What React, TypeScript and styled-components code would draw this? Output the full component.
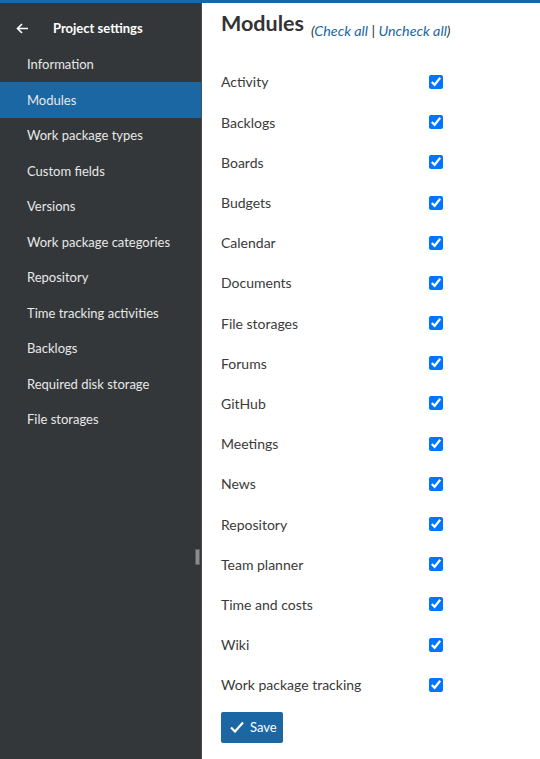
import React, { useState } from "react";
import styled, { createGlobalStyle } from "styled-components";

const GlobalStyle = createGlobalStyle`
	html, body {
		margin: 0;
		padding: 0;
		background: #fff;
		font-family: Lato, "Noto Sans", sans-serif;
	}
`;

const Page = styled.div`
	width: 540px;
	height: 759px;
	display: flex;
	flex-direction: column;
	overflow: hidden;
`;

const TopBar = styled.div`
	height: 3px;
	background: #1a67a3;
	flex-shrink: 0;
`;

const Body = styled.div`
	flex: 1;
	display: flex;
	min-height: 0;
`;

const Sidebar = styled.nav`
	position: relative;
	width: 202px;
	flex-shrink: 0;
	background: #333739;
	border-right: 1px solid #4a4e51;
	box-sizing: border-box;
	display: flex;
	flex-direction: column;
`;

const SideHeader = styled.div`
	display: flex;
	align-items: center;
	height: 20px;
	padding: 15px 0 8.5px 16px;
	color: #fff;
	font-size: 13px;
	font-weight: 700;
`;

const BackIcon = styled.svg`
	width: 13px;
	height: 13px;
	margin-right: 24px;
`;

const NavItem = styled.div<{ $active?: boolean }>`
	height: 35.5px;
	display: flex;
	align-items: center;
	padding-left: 27px;
	font-size: 13px;
	color: #e8e8e8;
	background: ${(p) => (p.$active ? "#1a67a3" : "transparent")};
`;

const ResizeHandle = styled.div`
	position: absolute;
	right: 1px;
	top: 546px;
	width: 3px;
	height: 14px;
	background: #8a8d90;
	border: 1px solid #5c6063;
`;

const Main = styled.main`
	flex: 1;
	padding: 7px 0 0 19px;
	color: #333;
`;

const TitleRow = styled.div`
	display: flex;
	align-items: flex-start;
	gap: 7px;
	height: 33px;
`;

const Title = styled.h2`
	margin: 0;
	font-size: 21.5px;
	line-height: 26px;
	font-weight: 700;
	color: #333;
`;

const Links = styled.span`
	margin-top: 12px;
	font-size: 14.3px;
	line-height: 18px;
	font-style: italic;
	color: #333;
`;

const Link = styled.a`
	color: #1a67a3;
	text-decoration: none;
	cursor: pointer;
`;

const List = styled.div`
	margin-top: 18.9px;
	display: flex;
	flex-direction: column;
`;

const Row = styled.label`
	height: 40.2px;
	display: flex;
	align-items: center;
	font-size: 14px;
	color: #3a3a3a;
`;

const RowLabel = styled.span`
	width: 208px;
`;

const Check = styled.input`
	width: 14px;
	height: 14px;
	margin: 0;
	accent-color: #0075ff;
`;

const SaveButton = styled.button`
	margin-top: 7px;
	width: 62px;
	height: 31px;
	display: flex;
	align-items: center;
	gap: 6px;
	padding: 0 0 0 9px;
	background: #1a67a3;
	border: 0;
	border-radius: 2px;
	color: #fff;
	font-family: Lato, "Noto Sans", sans-serif;
	font-size: 13px;
`;

const navItems = [
	"Information",
	"Modules",
	"Work package types",
	"Custom fields",
	"Versions",
	"Work package categories",
	"Repository",
	"Time tracking activities",
	"Backlogs",
	"Required disk storage",
	"File storages",
];

const modules = [
	"Activity",
	"Backlogs",
	"Boards",
	"Budgets",
	"Calendar",
	"Documents",
	"File storages",
	"Forums",
	"GitHub",
	"Meetings",
	"News",
	"Repository",
	"Team planner",
	"Time and costs",
	"Wiki",
	"Work package tracking",
];

const App = () => {
	const [checked, setChecked] = useState<boolean[]>(modules.map(() => true));

	const setAll = (v: boolean) => setChecked(modules.map(() => v));

	return (
		<Page>
			<GlobalStyle />
			<TopBar />
			<Body>
				<Sidebar>
					<SideHeader>
						<BackIcon viewBox="0 0 13 13" fill="none" stroke="#fff" strokeWidth="1.6">
							<path d="M12 6.5H1.5M6 2L1.5 6.5 6 11" />
						</BackIcon>
						Project settings
					</SideHeader>
					{navItems.map((n) => (
						<NavItem key={n} $active={n === "Modules"}>
							{n}
						</NavItem>
					))}
					<ResizeHandle />
				</Sidebar>
				<Main>
					<TitleRow>
						<Title>Modules</Title>
						<Links>
							(<Link onClick={() => setAll(true)}>Check all</Link> |{" "}
							<Link onClick={() => setAll(false)}>Uncheck all</Link>)
						</Links>
					</TitleRow>
					<List>
						{modules.map((m, i) => (
							<Row key={m}>
								<RowLabel>{m}</RowLabel>
								<Check
									type="checkbox"
									checked={checked[i]}
									onChange={() =>
										setChecked(checked.map((c, j) => (j === i ? !c : c)))
									}
								/>
							</Row>
						))}
					</List>
					<SaveButton>
						<svg width="14" height="12" viewBox="0 0 14 12" fill="none" stroke="#fff" strokeWidth="2.2">
							<path d="M1 6.5L5 10.5 13 1.5" />
						</svg>
						Save
					</SaveButton>
				</Main>
			</Body>
		</Page>
	);
};

export default App;
